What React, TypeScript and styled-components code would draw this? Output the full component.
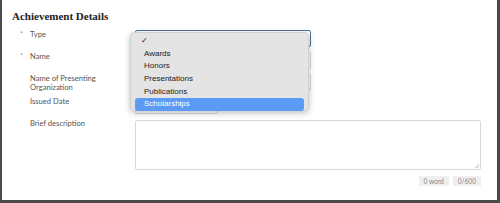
import React from 'react';
import styled, { createGlobalStyle } from 'styled-components';

const Global = createGlobalStyle`
  html, body { margin: 0; padding: 0; background: #fff; }
  * { box-sizing: border-box; }
`;

const Frame = styled.div`
  width: 500px;
  height: 203px;
  border-left: 2px solid #4a4a4a;
  border-right: 3px solid #4a4a4a;
  border-bottom: 3px solid #4a4a4a;
  background: #fff;
  padding: 9px 14px 0 10px;
  position: relative;
  overflow: hidden;
`;

const Title = styled.h2`
  margin: 0 0 7px 0;
  font-family: 'Liberation Serif', serif;
  font-weight: 700;
  font-size: 11px;
  line-height: 14px;
  color: #222;
`;

const Form = styled.div`
  display: grid;
  grid-template-columns: 123px 1fr;
  row-gap: 5px;
`;

const Label = styled.div<{ $required?: boolean }>`
  font-family: 'Lato', sans-serif;
  font-size: 7.6px;
  line-height: 9px;
  color: #555;
  padding: 0 0 0 ${({ $required }) => ($required ? '8px' : '18px')};
  display: flex;
  gap: 7px;
`;

const Star = styled.span`
  color: #b58a9c;
  font-size: 7px;
`;

const Field = styled.div`
  position: relative;
`;

const Input = styled.div<{ $w: number; $focus?: boolean }>`
  width: ${({ $w }) => $w}px;
  height: 17px;
  border: 1px solid ${({ $focus }) => ($focus ? '#4f6f99' : '#d6d6d6')};
  border-radius: 2px;
  background: #fff;
`;

const TextArea = styled.div`
  width: 346px;
  height: 50px;
  margin-top: 1px;
  border: 1px solid #d8d8d8;
  border-radius: 2px;
  position: relative;
`;

const Grip = styled.svg`
  position: absolute;
  right: 1px;
  bottom: 1px;
`;

const Counters = styled.div`
  grid-column: 2;
  width: 346px;
  display: flex;
  justify-content: flex-end;
  gap: 4px;
  margin-top: 1px;
`;

const Chip = styled.span`
  font-family: 'Lato', sans-serif;
  font-size: 6.6px;
  line-height: 10px;
  color: #888;
  background: #efefef;
  padding: 0 5px;
`;

const Menu = styled.div`
  position: absolute;
  left: 128px;
  top: 32px;
  width: 179px;
  height: 79px;
  background: #e4e4e4;
  border: 1px solid #d0d0d0;
  border-radius: 5px;
  box-shadow: 0 2px 6px rgba(0, 0, 0, 0.25);
  padding: 2px 4px 0 4px;
  font-family: 'Liberation Sans', Arial, sans-serif;
  font-size: 8px;
  color: #1a1a1a;
  z-index: 2;
`;

const Item = styled.div<{ $active?: boolean }>`
  height: 12.7px;
  line-height: 12.7px;
  padding-left: 9px;
  border-radius: 3px;
  background: ${({ $active }) => ($active ? '#5b9bf6' : 'transparent')};
  color: ${({ $active }) => ($active ? '#fff' : '#1a1a1a')};
`;

const Check = styled.div`
  height: 12.7px;
  line-height: 12.7px;
  padding-left: 6px;
  font-size: 8px;
`;

const options = ['Awards', 'Honors', 'Presentations', 'Publications'];

export default function App() {
  return (
    <>
      <Global />
      <Frame>
        <Title>Achievement Details</Title>
        <Form>
          <Label $required>
            <Star>*</Star>Type
          </Label>
          <Field>
            <Input $w={176} $focus />
          </Field>

          <Label $required>
            <Star>*</Star>Name
          </Label>
          <Field>
            <Input $w={176} />
          </Field>

          <Label>
            Name of Presenting
            <br />
            Organization
          </Label>
          <Field>
            <Input $w={176} />
          </Field>

          <Label>Issued Date</Label>
          <Field>
            <Input $w={83} />
          </Field>

          <Label>Brief description</Label>
          <Field>
            <TextArea>
              <Grip width="5" height="5" viewBox="0 0 5 5">
                <path d="M1 5 L5 1 M3 5 L5 3" stroke="#999" strokeWidth="0.6" />
              </Grip>
            </TextArea>
          </Field>

          <Counters>
            <Chip>0 word</Chip>
            <Chip>0/600</Chip>
          </Counters>
        </Form>

        <Menu>
          <Check>✓</Check>
          {options.map((o) => (
            <Item key={o}>{o}</Item>
          ))}
          <Item $active>Scholarships</Item>
        </Menu>
      </Frame>
    </>
  );
}
